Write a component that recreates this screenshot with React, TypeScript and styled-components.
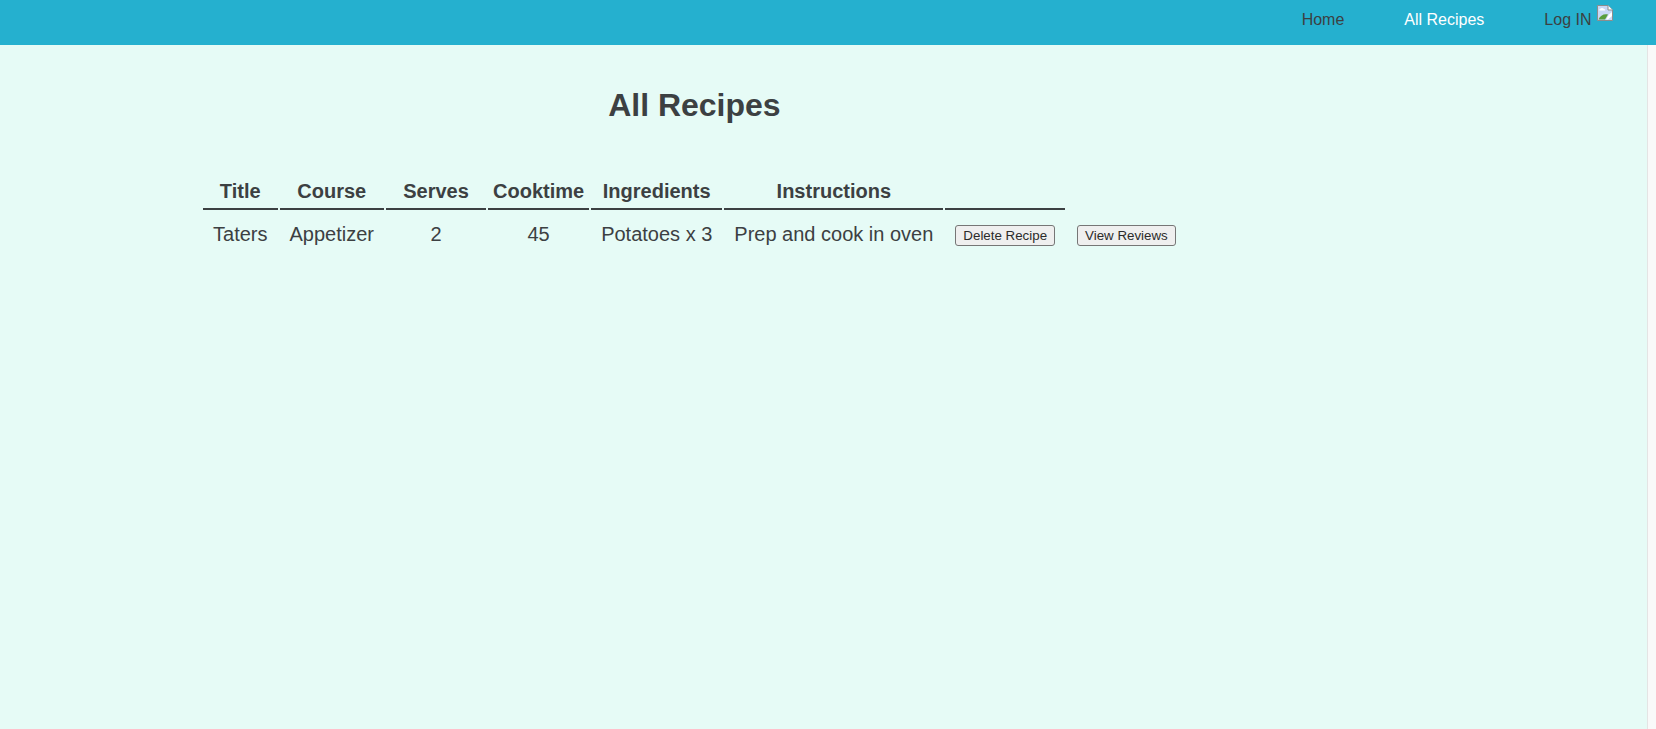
import React from "react";
import styled, { createGlobalStyle } from "styled-components";

const Global = createGlobalStyle`
  html, body { margin: 0; padding: 0; height: 100%; overflow: hidden; }
  body { font-family: "Liberation Sans", Arial, sans-serif; color: #3c4042; }
`;

const Page = styled.div`
  display: grid;
  grid-template-rows: 45px 1fr;
  height: 729px;
  background: #e6fbf6;
`;

const NavBar = styled.nav`
  display: flex;
  justify-content: flex-end;
  align-items: flex-start;
  background: #25b0cf;
  padding-right: 43.5px;
`;

const NavLink = styled.a<{ $active?: boolean }>`
  font-size: 16px;
  line-height: 18px;
  margin-left: 60px;
  padding-top: 11px;
  color: ${(p) => (p.$active ? "#ffffff" : "#3c4042")};
`;

const BrokenIcon = styled.svg`
  display: block;
  width: 16px;
  height: 16px;
  margin: 5px 0 0 5px;
`;

const Body = styled.div`
  display: flex;
  min-height: 0;
`;

const Main = styled.main`
  flex: 1;
  padding-left: 201px;
`;

const Track = styled.div`
  width: 8px;
  background: #f9f9f9;
  border-left: 1px solid #e4e4e4;
`;

const Content = styled.div`
  width: fit-content;
`;

const Title = styled.h1`
  margin: 42px 0 54px;
  font-size: 32px;
  line-height: 37px;
  font-weight: 700;
  text-align: center;
`;

const Table = styled.table`
  border-spacing: 2px;
  border-collapse: separate;
  font-size: 20px;
`;

const Th = styled.th<{ $min?: number }>`
  padding: 0 5px 5px;
  min-width: ${(p) => (p.$min ? `${p.$min}px` : "0")};
  font-size: 20px;
  line-height: 23px;
  font-weight: 700;
  text-align: center;
  border-bottom: 2px solid #3c4042;
`;

const Td = styled.td`
  padding: 11px 10px 10px;
  line-height: 23px;
  text-align: center;
  vertical-align: top;
  white-space: nowrap;
`;

const Button = styled.button`
  display: block;
  box-sizing: border-box;
  height: 21px;
  margin-top: 2px;
  padding: 0 7px;
  font-family: "Liberation Sans", Arial, sans-serif;
  font-size: 13.33px;
  color: #2b2b2b;
  background: #efefef;
  border: 1px solid #767676;
  border-radius: 3px;
`;

const headers: { label: string; min?: number }[] = [
  { label: "Title", min: 64.5 },
  { label: "Course" },
  { label: "Serves", min: 90 },
  { label: "Cooktime" },
  { label: "Ingredients" },
  { label: "Instructions" },
  { label: "" },
];
const cells = ["Taters", "Appetizer", "2", "45", "Potatoes x 3", "Prep and cook in oven"];

export default function App() {
  return (
    <Page>
      <Global />
      <NavBar>
        <NavLink>Home</NavLink>
        <NavLink $active>All Recipes</NavLink>
        <NavLink>Log IN</NavLink>
        <BrokenIcon viewBox="0 0 16 16">
          <path d="M0.5 0.5H11L15.5 5V15.5H0.5Z" fill="#c9d8f5" stroke="#8d8d8d" />
          <path d="M11 0.5V5H15.5" fill="#ffffff" stroke="#8d8d8d" />
          <path d="M3 4c1-1.5 3-1.5 4 0 1 0 1.5.8 1 1.5H2.5C2 5 2.300 4.200 3 4Z" fill="#ffffff" />
          <path d="M1.500 14.500C3 10.500 7 8.500 11 9.500L8 14.500Z" fill="#5a9e3c" />
          <path d="M12 9.500L15 7V11L11 14.500H9Z" fill="#ffffff" />
        </BrokenIcon>
      </NavBar>
      <Body>
        <Main>
          <Content>
            <Title>All Recipes</Title>
            <Table>
              <thead>
                <tr>
                  {headers.map((h, i) => (
                    <Th key={i} $min={h.min}>
                      {h.label}
                    </Th>
                  ))}
                </tr>
              </thead>
              <tbody>
                <tr>
                  {cells.map((c) => (
                    <Td key={c}>{c}</Td>
                  ))}
                  <Td>
                    <Button>Delete Recipe</Button>
                  </Td>
                  <Td>
                    <Button>View Reviews</Button>
                  </Td>
                </tr>
              </tbody>
            </Table>
          </Content>
        </Main>
        <Track />
      </Body>
    </Page>
  );
}
